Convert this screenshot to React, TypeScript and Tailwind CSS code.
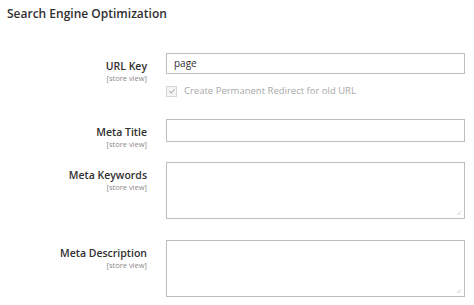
const fields = [
  { label: 'Meta Title', kind: 'input', mt: 'mt-[21px]' },
  { label: 'Meta Keywords', kind: 'textarea', mt: 'mt-[13px]' },
  { label: 'Meta Description', kind: 'textarea', mt: 'mt-[21px]' },
]

const Label = ({ text }: { text: string }) => (
  <div className="w-[147px] shrink-0 pt-[7px] text-right">
    <div className="text-[10.5px] leading-[13px] font-semibold text-[#303030]">{text}</div>
    <div className="text-[7.5px] leading-[10px] text-[#8a8a8a]">[store view]</div>
  </div>
)

export default function App() {
  return (
    <div className="h-[305px] w-[474px] bg-white font-['Open_Sans',sans-serif]">
      <div className="pl-[7px] pt-[5px] text-[12px] font-semibold text-[#303030]">Search Engine Optimization</div>

      <div className="mt-[30px] flex gap-[19px]">
        <Label text="URL Key" />
        <div className="flex w-[299px] flex-col">
          <div className="flex h-[21px] items-center border border-[#bdbdbd] px-[7px] text-[10px] text-[#303030]">page</div>
          <div className="mt-[10px] flex items-center gap-[7px] text-[9.5px] text-[#a8a8a8]">
            <span className="flex h-[11px] w-[11px] items-center justify-center border border-[#d6d6d6] bg-[#f4f4f4]">
              <svg viewBox="0 0 10 10" className="h-[8px] w-[8px]">
                <path d="M1.5 5.2 L4 7.5 L8.5 2.5" fill="none" stroke="#b5b5b5" strokeWidth="1.4" />
              </svg>
            </span>
            <span>Create Permanent Redirect for old URL</span>
          </div>
        </div>
      </div>

      {fields.map((f) => (
        <div key={f.label} className={`${f.mt} flex gap-[19px]`}>
          <Label text={f.label} />
          {f.kind === 'input' ? (
            <div className="h-[23px] w-[299px] border border-[#bdbdbd]" />
          ) : (
            <div className="relative h-[57px] w-[299px] border border-[#bdbdbd]">
              <svg viewBox="0 0 6 6" className="absolute bottom-[2px] right-[2px] h-[6px] w-[6px]">
                <path d="M5 1 L1 5 M5 3.5 L3.5 5" stroke="#c8c8c8" strokeWidth="0.8" />
              </svg>
            </div>
          )}
        </div>
      ))}
    </div>
  )
}
